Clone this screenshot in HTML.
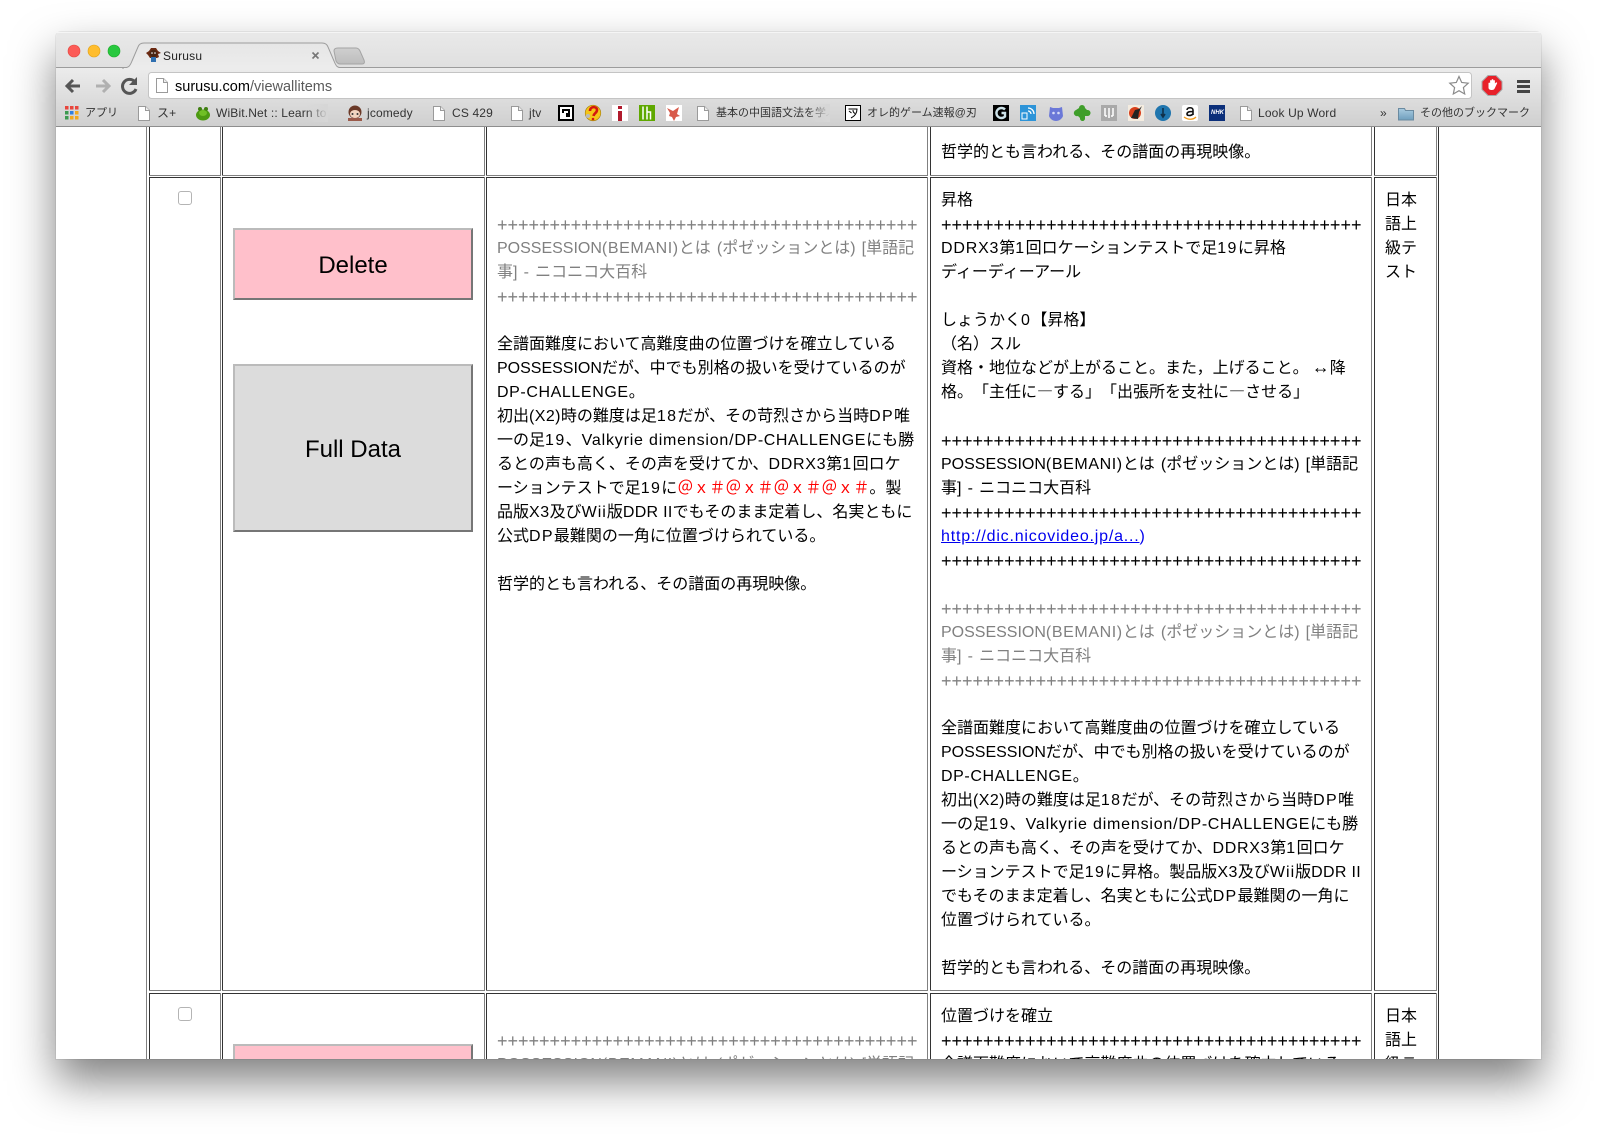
<!DOCTYPE html>
<html lang="ja"><head><meta charset="utf-8"><title>Surusu</title>
<style>
html,body{margin:0;padding:0;background:#fff;width:1597px;height:1139px;overflow:hidden}
body{position:relative;font-family:"Liberation Sans","Noto Sans CJK JP",sans-serif;text-spacing-trim:space-all}
#win{position:absolute;left:56px;top:32px;width:1485px;height:1027px;border-radius:5px 5px 0 0;box-shadow:0 22px 44px rgba(0,0,0,.5),0 0 0 1px rgba(0,0,0,.06);background:#fff}
#page{position:absolute;left:0;top:127px;width:1597px;height:932px;overflow:hidden}
#inner{position:absolute;left:0;top:-127px;width:1597px;height:1139px}
.v,.h{position:absolute}
.l{position:absolute;white-space:pre;height:24px;line-height:24px;font-size:16px;color:#000;margin-top:2px}
.g{color:#808080;word-spacing:1.7px}
.r{color:#f00}
.p{font-size:18px}
.n{letter-spacing:1.4px}
.u{letter-spacing:.6px}
.w{letter-spacing:.8px}
.q{letter-spacing:1.3px}
.d{font-family:"Noto Sans CJK JP",sans-serif;line-height:0}
.ar{padding-left:3px;font-size:18px;line-height:0}
a{color:#00e;text-decoration:underline;letter-spacing:.8px}
.btn{position:absolute;left:233px;width:240px;box-sizing:border-box;border:2px solid;border-color:#bbb #767676 #767676 #bbb;text-align:center;font-size:24px;color:#000}
.cb{position:absolute;left:178px;width:14px;height:14px;box-sizing:border-box;border:1px solid #b4b4b4;border-radius:3px;background:#fff}
.b{position:absolute;top:104px;height:18px;line-height:18px;font-size:12px;letter-spacing:.15px;color:#333;white-space:pre}
.fade{position:absolute;top:104px;height:18px}
svg{position:absolute;left:0;top:0}
</style></head><body>
<div id="win"></div>
<svg width="1597" height="127" viewBox="0 0 1597 127">
<defs>
<linearGradient id="strip" x1="0" y1="0" x2="0" y2="1"><stop offset="0" stop-color="#e9e9e9"/><stop offset="1" stop-color="#d0d0d0"/></linearGradient>
<linearGradient id="tool" x1="0" y1="0" x2="0" y2="1"><stop offset="0" stop-color="#ececec"/><stop offset="1" stop-color="#cfcfcf"/></linearGradient>
<linearGradient id="tab" x1="0" y1="0" x2="0" y2="1"><stop offset="0" stop-color="#e6e6e6"/><stop offset="1" stop-color="#ececec"/></linearGradient>
<linearGradient id="nt" x1="0" y1="0" x2="0" y2="1"><stop offset="0" stop-color="#cfcfcf"/><stop offset="1" stop-color="#bdbdbd"/></linearGradient>
<linearGradient id="fold" x1="0" y1="0" x2="0" y2="1"><stop offset="0" stop-color="#a9cbe0"/><stop offset="1" stop-color="#6f9fbd"/></linearGradient>
<g id="doc"><path d="M.5.5h7l4 4v10H.5z" fill="#fff" stroke="#9a9a9a"/><path d="M7.5.5v4h4" fill="#eee" stroke="#9a9a9a"/></g>
</defs>
<path d="M56 127V37a5 5 0 0 1 5-5h1475a5 5 0 0 1 5 5v90z" fill="url(#strip)"/>
<rect x="56" y="32" width="1485" height="1" fill="#f5f5f5"/>
<rect x="56" y="68" width="1485" height="59" fill="url(#tool)"/>
<rect x="56" y="67" width="1485" height="1" fill="#9c9c9c"/>
<rect x="56" y="126" width="1485" height="1" fill="#8e8e8e"/>
<path d="M122 68c7 0 8-2 10-7l6-14c1-3 3-4 6-4h178c3 0 5 1 6 4l6 14c2 5 3 7 9 7" fill="url(#tab)" stroke="#9c9c9c"/>
<path d="M124 68h220v2H124z" fill="#ececec"/>
<path d="M338 48h18c2 0 3 1 4 3l4 9c1 3 0 4-2 4h-22c-2 0-3-1-4-3l-2-10c0-2 1-3 4-3z" fill="url(#nt)" stroke="#a4a4a4"/>
<circle cx="74" cy="51" r="6" fill="#fc5b57" stroke="#e2463f" stroke-width=".6"/>
<circle cx="94" cy="51" r="6" fill="#ffbd2e" stroke="#e1a116" stroke-width=".6"/>
<circle cx="114" cy="51" r="6" fill="#28c83f" stroke="#1aab29" stroke-width=".6"/>
<!-- favicon -->
<g transform="translate(146,47)"><path d="M0 6l3-2 2-3h5l2 3 3 2-3 1 1 3-2 1H4L2 8z" fill="#6b2a12"/><circle cx="7.500" cy="6.500" r="3.800" fill="#4a2512"/><rect x="5" y="10" width="5" height="5" fill="#2f6fb0"/><circle cx="6" cy="6" r=".8" fill="#fff"/><circle cx="9" cy="6" r=".8" fill="#fff"/></g>
<path d="M312.500 52.500l6 6m0-6l-6 6" stroke="#777" stroke-width="1.600"/>
<!-- nav -->
<path d="M80 86H68m5-6l-6 6 6 6" fill="none" stroke="#555" stroke-width="3"/>
<path d="M96 86h12m-5-6l6 6-6 6" fill="none" stroke="#b0b0b0" stroke-width="3"/>
<path d="M135 82a7 7 0 1 0 1 7" fill="none" stroke="#555" stroke-width="3"/><path d="M137 77v8h-8z" fill="#555"/>
<!-- omnibox -->
<rect x="148.500" y="72.500" width="1323" height="26" rx="3" fill="#fff" stroke="#c4c4c4"/>
<use href="#doc" x="156" y="78"/>
<path d="M1459 76.500l2.700 6 6.500.7-4.800 4.400 1.300 6.400-5.700-3.300-5.700 3.300 1.300-6.400-4.800-4.400 6.500-.7z" fill="#fff" stroke="#8a8a8a" stroke-width="1.200"/>
<path d="M1488 75.500h8l6 6v8l-6 6h-8l-6-6v-8z" fill="#e8212a" stroke="#a8a8a8"/>
<path d="M1488.500 89v-6a1 1 0 0 1 1.600 0v-2.500a1 1 0 0 1 1.600 0v-1a1 1 0 0 1 1.600 0v1a1 1 0 0 1 1.600 0v3l1-1c1-.5 1.600.3 1 1.200l-2 4.300c-.7 1.500-1.600 2-3 2-2 0-2.900-.5-3.400-2z" fill="#fff"/>
<rect x="1517" y="80" width="13" height="3" fill="#444"/><rect x="1517" y="85" width="13" height="3" fill="#444"/><rect x="1517" y="90" width="13" height="3" fill="#444"/>
<!-- apps -->
<g transform="translate(65,106)">
<rect width="3.500" height="3.500" fill="#e8453c"/><rect x="5" width="3.500" height="3.500" fill="#e8453c"/><rect x="10" width="3.500" height="3.500" fill="#e8453c"/>
<rect y="5" width="3.500" height="3.500" fill="#3c9a4f"/><rect x="5" y="5" width="3.500" height="3.500" fill="#2f7fe0"/><rect x="10" y="5" width="3.500" height="3.500" fill="#f2a81d"/>
<rect y="10" width="3.500" height="3.500" fill="#3c9a4f"/><rect x="5" y="10" width="3.500" height="3.500" fill="#f2a81d"/><rect x="10" y="10" width="3.500" height="3.500" fill="#f2a81d"/></g>
<use href="#doc" x="138" y="106"/>
<g transform="translate(195,106)"><ellipse cx="8" cy="9" rx="7" ry="5.500" fill="#4d9a12"/><circle cx="5" cy="3" r="2" fill="#3f7f10"/><circle cx="11" cy="3" r="2" fill="#3f7f10"/><ellipse cx="8" cy="7" rx="4" ry="3" fill="#70bf25"/></g>
<g transform="translate(347,105)"><circle cx="8" cy="7" r="6.500" fill="#6b3a28"/><ellipse cx="8" cy="9" rx="5" ry="4" fill="#f2d5c0"/><path d="M1 13h14v3H1z" fill="#9a5a4a"/><circle cx="5.500" cy="9" r="1" fill="#333"/><circle cx="10.500" cy="9" r="1" fill="#333"/></g>
<use href="#doc" x="433" y="106"/>
<use href="#doc" x="511" y="106"/>
<g transform="translate(558,105)"><rect width="16" height="16" fill="#000"/><rect x="2" y="2" width="12" height="12" fill="#fff"/><path d="M4 4h8v8H8V8H4z" fill="#000"/><rect x="6" y="6" width="4" height="4" fill="#fff"/><rect x="8" y="8" width="2" height="2" fill="#000"/></g>
<g transform="translate(585,105)"><circle cx="8" cy="8" r="7.800" fill="#f4c518" stroke="#a47d10" stroke-width=".6"/><path d="M5 6c0-5 7-5 7-1 0 3-3 3-3.500 6" fill="none" stroke="#d3170f" stroke-width="2.600"/><circle cx="8" cy="14" r="1.300" fill="#d3170f"/><circle cx="3" cy="11" r="2" fill="#bbb"/></g>
<g transform="translate(612,105)"><rect width="16" height="16" fill="#fff"/><rect x="6" y="1" width="4" height="3" fill="#b01a2c"/><rect x="6" y="6" width="4" height="10" fill="#b01a2c"/></g>
<g transform="translate(639,105)"><rect width="16" height="16" fill="#5fa800"/><path d="M4 1.500v13M8 14.500V1.500M8 7h3.500v7.500" fill="none" stroke="#fff" stroke-width="1.500"/></g>
<g transform="translate(666,105)"><rect width="16" height="16" fill="#fff"/><path d="M1 3l6 3 6-4-2 7 3 2-4 1-2 4-2-4-3-1 1-3z" fill="#d85a4a"/></g>
<use href="#doc" x="697" y="106"/>
<g transform="translate(845,105)"><rect x=".5" y=".5" width="15" height="15" fill="#fff" stroke="#000"/><path d="M3.500 4h8.500c0 4-2 7-6 9M4 6l2.500 2M8 5c0 2 1 3 2 3.500" fill="none" stroke="#000" stroke-width="1"/></g>
<g transform="translate(993,105)"><rect width="16" height="16" fill="#000"/><path d="M12 4.500a5 5 0 1 0 0 7V8H8.500" fill="none" stroke="#cde2e8" stroke-width="2.400"/></g>
<g transform="translate(1020,105)"><rect width="16" height="16" fill="#2d94d8"/><path d="M8 3a6 6 0 0 1 6 6M8 6a3 3 0 0 1 3 3" fill="none" stroke="#fff" stroke-width="1.300"/><rect x="2" y="8" width="5" height="6" fill="none" stroke="#fff"/></g>
<g transform="translate(1048,105)"><path d="M2 2l3 1h6l3-1 1 9c-1 3-4 5-7 5s-6-2-7-5z" fill="#6b78d8"/><circle cx="5.500" cy="8" r="1.300" fill="#d8dcf8"/><circle cx="10.500" cy="8" r="1.300" fill="#d8dcf8"/></g>
<g transform="translate(1074,105)"><path d="M5 3a3 3 0 0 1 6 0l2 2a3 3 0 0 1 1 6h-3v3a2 2 0 0 1-5-1l-2-2a3 3 0 0 1-2-6z" fill="#3f9e2a"/></g>
<g transform="translate(1101,105)"><rect width="16" height="16" fill="#a9a9a9"/><path d="M4 3v8M8 3v10M12 3v8M4 11h2M10 11h2" fill="none" stroke="#fff" stroke-width="1.500"/></g>
<g transform="translate(1128,105)"><rect width="16" height="16" fill="#f4ece0"/><circle cx="7" cy="8" r="6" fill="#d8401c"/><path d="M3 13l4-8 4-1 3-3-3 6-1 7z" fill="#222"/></g>
<g transform="translate(1155,105)"><circle cx="8" cy="8" r="8" fill="#1f75ae"/><path d="M8 3v8M6 9l2 3 2-3" fill="none" stroke="#10304a" stroke-width="1.600"/></g>
<g transform="translate(1182,105)"><rect width="16" height="16" rx="2" fill="#fff"/><path d="M5 5c0-3 6-3 6 0v5M11 6.500c-4 0-6 .5-6 2.500s4 2 6 0" fill="none" stroke="#111" stroke-width="1.600"/><path d="M2 12c4 3 9 3 12 0" fill="none" stroke="#f29a1a" stroke-width="1.300"/></g>
<g transform="translate(1209,105)"><rect width="16" height="16" fill="#0b2f7a"/></g>
<use href="#doc" x="1240" y="106"/>
<g transform="translate(1398,106)"><path d="M.5 2.500h6l1 2h8v9.500H.5z" fill="url(#fold)" stroke="#6a8aa0"/></g>
</svg>
<div class="b" style="left:163px;top:47px;font-size:12px;color:#222;letter-spacing:.2px">Surusu</div>
<div style="position:absolute;left:175px;top:77px;height:20px;line-height:20px;font-size:14.5px;white-space:pre;color:#000">surusu.com<span style="color:#5a5a5a">/viewallitems</span></div>
<div class="b" style="left:85px;font-size:11px;letter-spacing:0">アプリ</div>
<div class="b" style="left:157px">ス+</div>
<div class="b" style="left:216px;width:112px;overflow:hidden">WiBit.Net :: Learn to</div>
<div class="fade" style="left:306px;width:22px;background:linear-gradient(90deg,rgba(214,214,214,0),#d6d6d6)"></div>
<div class="b" style="left:367px">jcomedy</div>
<div class="b" style="left:452px">CS 429</div>
<div class="b" style="left:529px">jtv</div>
<div class="b" style="left:716px;width:114px;overflow:hidden;letter-spacing:0;font-size:11px">基本の中国語文法を学ぶ</div>
<div class="fade" style="left:808px;width:22px;background:linear-gradient(90deg,rgba(214,214,214,0),#d6d6d6)"></div>
<div class="b" style="left:867px;width:114px;overflow:hidden;letter-spacing:0;font-size:11px">オレ的ゲーム速報@刃</div>
<div class="b" style="left:1210px;width:15px;font-size:6px;font-weight:bold;font-style:italic;color:#fff;letter-spacing:0;text-align:center">NHK</div>
<div class="b" style="left:1258px">Look Up Word</div>
<div class="b" style="left:1380px">»</div>
<div class="b" style="left:1420px;letter-spacing:0;font-size:11px">その他のブックマーク</div>

<div id="page"><div id="inner">
<!-- outer table verticals -->
<div class="v" style="left:146px;top:127px;width:1px;height:932px;background:#808080"></div>
<div class="v" style="left:1438px;top:127px;width:1px;height:932px;background:#333"></div>
<!-- row 1 -->
<div class="v" style="left:149px;top:127px;width:1px;height:48px;background:#333"></div><div class="v" style="left:220px;top:127px;width:1px;height:48px;background:#808080"></div>
<div class="v" style="left:222px;top:127px;width:1px;height:48px;background:#333"></div><div class="v" style="left:484px;top:127px;width:1px;height:48px;background:#808080"></div>
<div class="v" style="left:486px;top:127px;width:1px;height:48px;background:#333"></div><div class="v" style="left:927px;top:127px;width:1px;height:48px;background:#808080"></div>
<div class="v" style="left:930px;top:127px;width:1px;height:48px;background:#333"></div><div class="v" style="left:1371px;top:127px;width:1px;height:48px;background:#808080"></div>
<div class="v" style="left:1374px;top:127px;width:1px;height:48px;background:#333"></div><div class="v" style="left:1436px;top:127px;width:1px;height:48px;background:#808080"></div>
<div class="h" style="left:149px;top:175px;width:72px;height:1px;background:#808080"></div>
<div class="h" style="left:222px;top:175px;width:263px;height:1px;background:#808080"></div>
<div class="h" style="left:486px;top:175px;width:442px;height:1px;background:#808080"></div>
<div class="h" style="left:930px;top:175px;width:442px;height:1px;background:#808080"></div>
<div class="h" style="left:1374px;top:175px;width:63px;height:1px;background:#808080"></div>
<!-- row 2 -->
<div class="h" style="left:149px;top:177px;width:72px;height:1px;background:#333"></div>
<div class="h" style="left:222px;top:177px;width:263px;height:1px;background:#333"></div>
<div class="h" style="left:486px;top:177px;width:442px;height:1px;background:#333"></div>
<div class="h" style="left:930px;top:177px;width:442px;height:1px;background:#333"></div>
<div class="h" style="left:1374px;top:177px;width:63px;height:1px;background:#333"></div>
<div class="v" style="left:149px;top:177px;width:1px;height:814px;background:#333"></div><div class="v" style="left:220px;top:177px;width:1px;height:814px;background:#808080"></div>
<div class="v" style="left:222px;top:177px;width:1px;height:814px;background:#333"></div><div class="v" style="left:484px;top:177px;width:1px;height:814px;background:#808080"></div>
<div class="v" style="left:486px;top:177px;width:1px;height:814px;background:#333"></div><div class="v" style="left:927px;top:177px;width:1px;height:814px;background:#808080"></div>
<div class="v" style="left:930px;top:177px;width:1px;height:814px;background:#333"></div><div class="v" style="left:1371px;top:177px;width:1px;height:814px;background:#808080"></div>
<div class="v" style="left:1374px;top:177px;width:1px;height:814px;background:#333"></div><div class="v" style="left:1436px;top:177px;width:1px;height:814px;background:#808080"></div>
<div class="h" style="left:149px;top:990px;width:72px;height:1px;background:#808080"></div>
<div class="h" style="left:222px;top:990px;width:263px;height:1px;background:#808080"></div>
<div class="h" style="left:486px;top:990px;width:442px;height:1px;background:#808080"></div>
<div class="h" style="left:930px;top:990px;width:442px;height:1px;background:#808080"></div>
<div class="h" style="left:1374px;top:990px;width:63px;height:1px;background:#808080"></div>
<!-- row 3 -->
<div class="h" style="left:149px;top:993px;width:72px;height:1px;background:#333"></div>
<div class="h" style="left:222px;top:993px;width:263px;height:1px;background:#333"></div>
<div class="h" style="left:486px;top:993px;width:442px;height:1px;background:#333"></div>
<div class="h" style="left:930px;top:993px;width:442px;height:1px;background:#333"></div>
<div class="h" style="left:1374px;top:993px;width:63px;height:1px;background:#333"></div>
<div class="v" style="left:149px;top:993px;width:1px;height:66px;background:#333"></div><div class="v" style="left:220px;top:993px;width:1px;height:66px;background:#808080"></div>
<div class="v" style="left:222px;top:993px;width:1px;height:66px;background:#333"></div><div class="v" style="left:484px;top:993px;width:1px;height:66px;background:#808080"></div>
<div class="v" style="left:486px;top:993px;width:1px;height:66px;background:#333"></div><div class="v" style="left:927px;top:993px;width:1px;height:66px;background:#808080"></div>
<div class="v" style="left:930px;top:993px;width:1px;height:66px;background:#333"></div><div class="v" style="left:1371px;top:993px;width:1px;height:66px;background:#808080"></div>
<div class="v" style="left:1374px;top:993px;width:1px;height:66px;background:#333"></div><div class="v" style="left:1436px;top:993px;width:1px;height:66px;background:#808080"></div>

<div class="cb" style="top:191px"></div>
<div class="cb" style="top:1007px"></div>
<div class="btn" style="top:228px;height:72px;line-height:72px;background:#ffc0cb">Delete</div>
<div class="btn" style="top:364px;height:168px;line-height:168px;background:#dcdcdc">Full Data</div>
<div class="btn" style="top:1044px;height:72px;background:#ffc0cb"></div>

<!-- row 1 text -->
<div class="l" style="left:941px;top:139px">哲学的とも言われる、その譜面の再現映像。</div>

<!-- column 3 -->
<div class="l g p" style="left:497px;top:211px">++++++++++++++++++++++++++++++++++++++++</div>
<div class="l g" style="left:497px;top:235px">POSSESSION<span class="u">(BEMANI)</span>とは (ポゼッションとは) [単語記</div>
<div class="l g" style="left:497px;top:259px">事] - ニコニコ大百科</div>
<div class="l g p" style="left:497px;top:283px">++++++++++++++++++++++++++++++++++++++++</div>
<div class="l" style="left:497px;top:331px">全譜面難度において高難度曲の位置づけを確立している</div>
<div class="l" style="left:497px;top:355px">POSSESSIONだが、中でも別格の扱いを受けているのが</div>
<div class="l" style="left:497px;top:379px"><span class="u">DP-CHALLENGE</span>。</div>
<div class="l" style="left:497px;top:403px">初出<span style="letter-spacing:.4px">(X2)</span>時の難度は足<span class="n">18</span>だが、その苛烈さから当時<span class="q">DP</span>唯</div>
<div class="l" style="left:497px;top:427px">一の足<span class="n">19</span>、<span class="w" style="word-spacing:0">Valkyrie dimension/</span><span class="u">DP-CHALLENGE</span>にも勝</div>
<div class="l" style="left:497px;top:451px">るとの声も高く、その声を受けてか、<span style="letter-spacing:.7px">DDRX3</span>第<span class="n">1</span>回ロケ</div>
<div class="l" style="left:497px;top:475px">ーションテストで足<span class="n">19</span>に<span class="r">＠ｘ＃＠ｘ＃＠ｘ＃＠ｘ＃</span>。製</div>
<div class="l" style="left:497px;top:499px">品版<span style="letter-spacing:.5px">X3</span>及び<span style="letter-spacing:1px">Wii</span>版<span style="letter-spacing:.3px">DDR II</span>でもそのまま定着し、名実ともに</div>
<div class="l" style="left:497px;top:523px">公式<span class="q">DP</span>最難関の一角に位置づけられている。</div>
<div class="l" style="left:497px;top:571px">哲学的とも言われる、その譜面の再現映像。</div>
<div class="l g p" style="left:497px;top:1027px">++++++++++++++++++++++++++++++++++++++++</div>
<div class="l g" style="left:497px;top:1051px">POSSESSION<span class="u">(BEMANI)</span>とは (ポゼッションとは) [単語記</div>

<!-- column 4 -->
<div class="l" style="left:941px;top:187px">昇格</div>
<div class="l p" style="left:941px;top:211px">++++++++++++++++++++++++++++++++++++++++</div>
<div class="l" style="left:941px;top:235px"><span style="letter-spacing:.8px">DDRX3</span>第<span class="n">1</span>回ロケーションテストで足<span class="n">19</span>に昇格</div>
<div class="l" style="left:941px;top:259px">ディーディーアール</div>
<div class="l" style="left:941px;top:307px">しょうかく<span class="n">0</span>【昇格】</div>
<div class="l" style="left:941px;top:331px">（名）スル</div>
<div class="l" style="left:941px;top:355px">資格・地位などが上がること。また，上げること。<span class="ar">↔</span>降</div>
<div class="l" style="left:941px;top:379px">格。「主任に<span class="d">―</span>する」「出張所を支社に<span class="d">―</span>させる」</div>
<div class="l p" style="left:941px;top:427px">++++++++++++++++++++++++++++++++++++++++</div>
<div class="l" style="left:941px;top:451px;word-spacing:1.7px">POSSESSION<span class="u">(BEMANI)</span>とは (ポゼッションとは) [単語記</div>
<div class="l" style="left:941px;top:475px;word-spacing:1.7px">事] - ニコニコ大百科</div>
<div class="l p" style="left:941px;top:499px">++++++++++++++++++++++++++++++++++++++++</div>
<div class="l" style="left:941px;top:523px"><a>http://dic.nicovideo.jp/a...</a><span style="color:#00e">)</span></div>
<div class="l p" style="left:941px;top:547px">++++++++++++++++++++++++++++++++++++++++</div>
<div class="l g p" style="left:941px;top:595px">++++++++++++++++++++++++++++++++++++++++</div>
<div class="l g" style="left:941px;top:619px">POSSESSION<span class="u">(BEMANI)</span>とは (ポゼッションとは) [単語記</div>
<div class="l g" style="left:941px;top:643px">事] - ニコニコ大百科</div>
<div class="l g p" style="left:941px;top:667px">++++++++++++++++++++++++++++++++++++++++</div>
<div class="l" style="left:941px;top:715px">全譜面難度において高難度曲の位置づけを確立している</div>
<div class="l" style="left:941px;top:739px">POSSESSIONだが、中でも別格の扱いを受けているのが</div>
<div class="l" style="left:941px;top:763px"><span class="u">DP-CHALLENGE</span>。</div>
<div class="l" style="left:941px;top:787px">初出<span style="letter-spacing:.4px">(X2)</span>時の難度は足<span class="n">18</span>だが、その苛烈さから当時<span class="q">DP</span>唯</div>
<div class="l" style="left:941px;top:811px">一の足<span class="n">19</span>、<span class="w">Valkyrie dimension/</span><span class="u">DP-CHALLENGE</span>にも勝</div>
<div class="l" style="left:941px;top:835px">るとの声も高く、その声を受けてか、<span style="letter-spacing:.7px">DDRX3</span>第<span class="n">1</span>回ロケ</div>
<div class="l" style="left:941px;top:859px">ーションテストで足<span class="n">19</span>に昇格。製品版<span style="letter-spacing:.5px">X3</span>及び<span style="letter-spacing:1px">Wii</span>版<span style="letter-spacing:.3px">DDR II</span></div>
<div class="l" style="left:941px;top:883px">でもそのまま定着し、名実ともに公式<span class="q">DP</span>最難関の一角に</div>
<div class="l" style="left:941px;top:907px">位置づけられている。</div>
<div class="l" style="left:941px;top:955px">哲学的とも言われる、その譜面の再現映像。</div>
<div class="l" style="left:941px;top:1003px">位置づけを確立</div>
<div class="l p" style="left:941px;top:1027px">++++++++++++++++++++++++++++++++++++++++</div>
<div class="l" style="left:941px;top:1051px">全譜面難度において高難度曲の位置づけを確立している</div>

<!-- column 5 -->
<div class="l" style="left:1385px;top:187px">日本</div>
<div class="l" style="left:1385px;top:211px">語上</div>
<div class="l" style="left:1385px;top:235px">級テ</div>
<div class="l" style="left:1385px;top:259px">スト</div>
<div class="l" style="left:1385px;top:1003px">日本</div>
<div class="l" style="left:1385px;top:1027px">語上</div>
<div class="l" style="left:1385px;top:1051px">級テ</div>
</div></div>
</body></html>
